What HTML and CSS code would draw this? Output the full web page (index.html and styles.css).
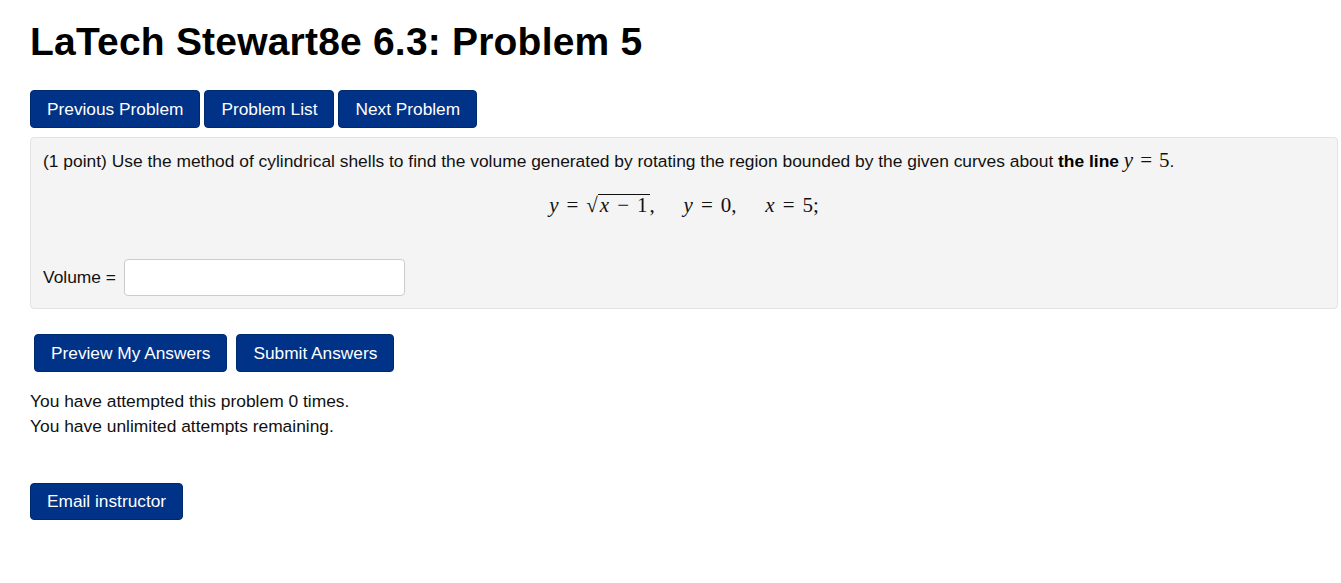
FILE: index.html
```html
<!DOCTYPE html>
<html>
<head>
<meta charset="utf-8">
<link rel="stylesheet" href="styles.css">
</head>
<body>
<div class="page">
  <h1 class="title">LaTech Stewart8e 6.3: Problem 5</h1>
  <div class="nav">
    <a class="btn">Previous Problem</a>
    <a class="btn">Problem List</a>
    <a class="btn">Next Problem</a>
  </div>
  <div class="problem">
    <p class="statement">(1 point) Use the method of cylindrical shells to find the volume generated by rotating the region bounded by the given curves about <b>the line</b> <span class="math"><i>y</i><span class="op">=</span>5</span>.</p>
    <div class="display">
      <span class="math"><i>y</i><span class="op">=</span><span class="sqrt"><span class="rad">√</span><span class="under"><i>x</i><span class="op">−</span>1</span></span>,</span>
      <span class="math"><i>y</i><span class="op">=</span>0,</span>
      <span class="math"><i>x</i><span class="op">=</span>5;</span>
    </div>
    <div class="answer">
      <label class="lbl">Volume =</label>
      <input class="field" type="text">
    </div>
  </div>
  <div class="actions">
    <a class="btn">Preview My Answers</a>
    <a class="btn">Submit Answers</a>
  </div>
  <div class="attempts">
    <div>You have attempted this problem 0 times.</div>
    <div>You have unlimited attempts remaining.</div>
  </div>
  <div class="email">
    <a class="btn">Email instructor</a>
  </div>
</div>
</body>
</html>
```
FILE: styles.css
```css
html, body {
  margin: 0;
  padding: 0;
  background: #fff;
}
body {
  font-family: "Liberation Sans", Arial, sans-serif;
  font-size: 17.4px;
  color: #111;
}
.page {
  padding: 0 3px 0 30px;
}
.title {
  margin: 0;
  padding-top: 18px;
  font-size: 39px;
  line-height: 48px;
  font-weight: bold;
  color: #000;
  letter-spacing: 0.2px;
}
.nav {
  margin-top: 24px;
  display: flex;
  gap: 4px;
}
.btn {
  display: inline-flex;
  align-items: center;
  justify-content: center;
  background: #003287;
  color: #fff;
  border: 1px solid #002a70;
  border-radius: 4px;
  height: 38px;
  box-sizing: border-box;
  padding: 0 16px;
  font-size: 17.3px;
  cursor: pointer;
}
.problem {
  margin-top: 9px;
  background: #f4f4f4;
  border: 1px solid #e3e3e3;
  border-radius: 4px;
  padding: 11px 12px 12px;
  height: 172px;
  box-sizing: border-box;
}
.statement {
  margin: 0;
  line-height: 22px;
  color: #111;
}
.statement b {
  color: #000;
}
.math {
  font-family: "Liberation Serif", "Times New Roman", serif;
  font-size: 21px;
  color: #111;
}
.math i {
  font-style: italic;
}
.op {
  margin: 0 7px;
}
.display {
  margin-top: 21px;
  text-align: center;
  line-height: 24px;
}
.display .math {
  margin: 0 12px;
}
.display .op {
  margin: 0 8px;
}
.sqrt {
  display: inline-block;
  white-space: nowrap;
}
.rad {
  font-size: 21px;
}
.under {
  border-top: 1px solid #111;
  padding: 0 2px;
  display: inline-block;
  line-height: 21px;
}
.answer {
  margin-top: 41px;
  display: flex;
  align-items: center;
  gap: 8px;
}
.lbl {
  color: #111;
}
.field {
  width: 281px;
  height: 37px;
  box-sizing: border-box;
  border: 1px solid #ccc;
  border-radius: 4px;
  background: #fff;
  margin: 0;
}
.actions {
  margin-top: 25px;
  padding-left: 4px;
  display: flex;
  gap: 9px;
}
.attempts {
  margin-top: 17px;
  line-height: 25px;
  color: #111;
}
.email {
  margin-top: 44px;
}
.email .btn {
  height: 37px;
}
```
